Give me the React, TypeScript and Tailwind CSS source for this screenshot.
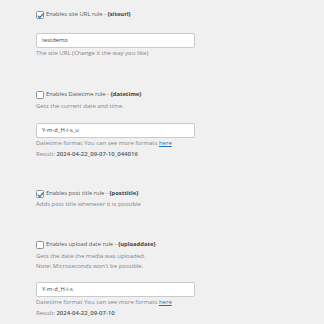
import React from "react";

const font = { fontFamily: '"Open Sans", "Noto Sans", sans-serif' };

function Check({ checked }: { checked?: boolean }) {
  return (
    <span className="relative inline-block w-[8px] h-[8px] shrink-0 border border-[#8c8f94] rounded-[1.5px] bg-white mr-[2px]">
      {checked && (
        <svg viewBox="0 0 10 10" className="absolute left-[-1px] top-[-1px] w-[9px] h-[9px]">
          <path d="M2 5.2 L4.2 7.4 L8.4 2.6" fill="none" stroke="#2271b1" strokeWidth="1.4" />
        </svg>
      )}
    </span>
  );
}

function Label({ checked, text, code }: { checked?: boolean; text: string; code: string }) {
  return (
    <div className="flex items-center h-[11px] text-[5.8px] text-[#50575e]">
      <Check checked={checked} />
      <span>
        {text} <span className="font-bold text-[#3c434a]">{`{${code}}`}</span>
      </span>
    </div>
  );
}

function Input({ value }: { value: string }) {
  return (
    <div className="w-[159px] h-[15px] bg-white border border-[#c9cacd] rounded-[2px] flex items-center pl-[5px] text-[5.8px] text-[#3c434a]">
      {value}
    </div>
  );
}

function Desc({ children, className = "" }: { children: React.ReactNode; className?: string }) {
  return <div className={`text-[6px] leading-[11px] text-[#80858b] ${className}`}>{children}</div>;
}

function Format() {
  return (
    <Desc>
      Datetime format You can see more formats{" "}
      <span className="text-[#2271b1] underline">here</span>
    </Desc>
  );
}

function Result({ value }: { value: string }) {
  return (
    <div className="text-[6px] leading-[11px] text-[#80858b]">
      Result: <span className="text-[#50575e] font-semibold">{value}</span>
    </div>
  );
}

export default function App() {
  return (
    <div className="w-[324px] h-[324px] bg-[#f0f0f1] pl-[36px] pt-[9px] overflow-hidden" style={font}>
      <Label checked text="Enables site URL rule -" code="siteurl" />
      <div className="mt-[13px]">
        <Input value="testdemo" />
      </div>
      <Desc>The site URL (Change it the way you like)</Desc>

      <div className="mt-[30px]">
        <Label text="Enables Datetime rule -" code="datetime" />
      </div>
      <Desc className="mt-[1px]">Gets the current date and time.</Desc>
      <div className="mt-[11px]">
        <Input value="Y-m-d_H-i-s_u" />
      </div>
      <Format />
      <Result value="2024-04-22_09-07-10_044016" />

      <div className="mt-[28px]">
        <Label checked text="Enables post title rule -" code="posttitle" />
      </div>
      <Desc>Adds post title whenever it is possible</Desc>

      <div className="mt-[29px]">
        <Label text="Enables upload date rule -" code="uploaddate" />
      </div>
      <div className="mt-[1px] text-[6px] leading-[10px] text-[#80858b]">
        <div>Gets the date the media was uploaded.</div>
        <div>Note: Microseconds won't be possible.</div>
      </div>
      <div className="mt-[11px]">
        <Input value="Y-m-d_H-i-s" />
      </div>
      <Format />
      <Result value="2024-04-22_09-07-10" />
    </div>
  );
}
